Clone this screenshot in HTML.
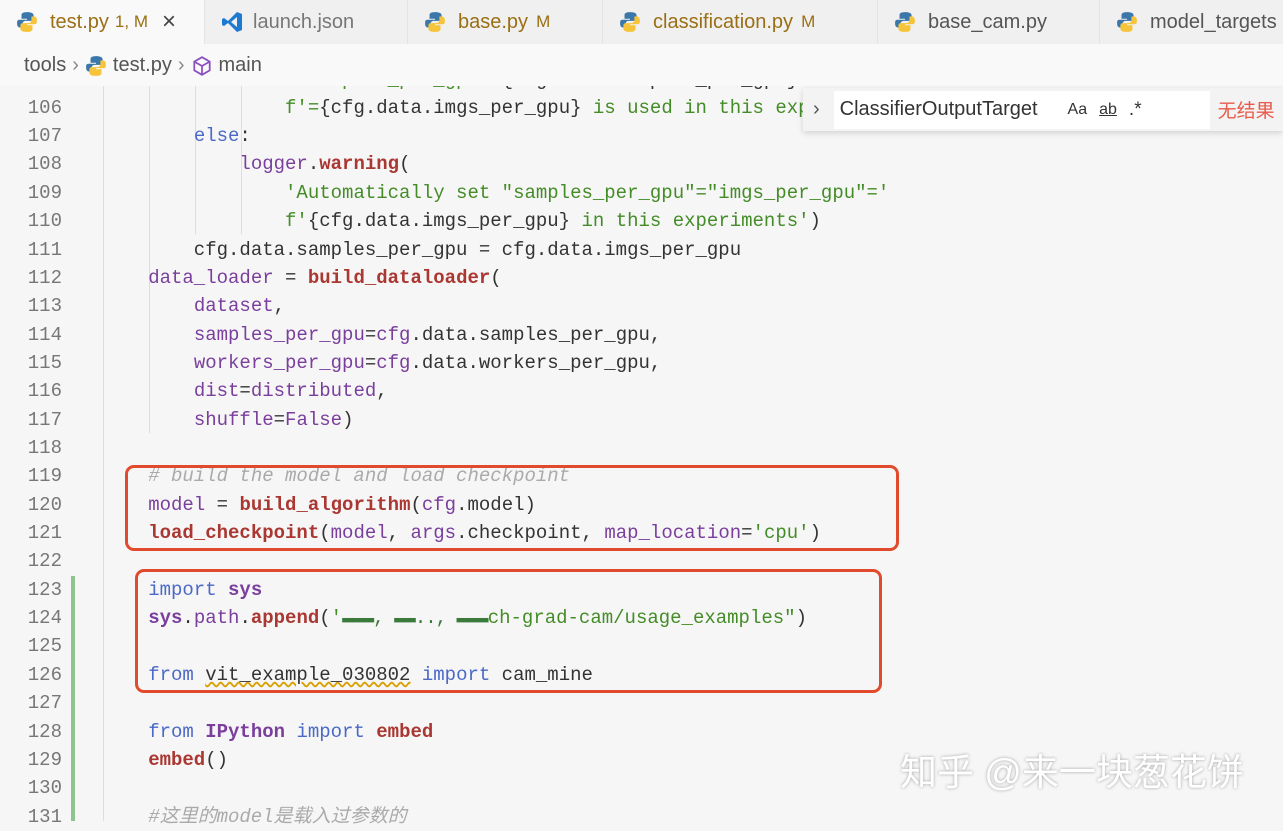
<!DOCTYPE html>
<html><head><meta charset="utf-8"><style>
*{margin:0;padding:0;box-sizing:border-box}
body{width:1283px;height:821px;overflow:hidden;background:#f6f6f6;font-family:"Liberation Sans","Noto Sans CJK SC",sans-serif;position:relative}
.tabs{position:absolute;left:0;top:0;width:1283px;height:44px;background:#ececec;z-index:3}
.tab{position:absolute;top:0;height:44px;display:flex;align-items:center;font-size:20px;color:#555;border-right:1px solid #e4e4e4;background:#f0f0f0}
.tab.act{background:#f9f9f9}
.mod{color:#9a6f14}
.py{width:22px;height:22px;margin:0 12px 0 16px;position:relative}
.crumbbg{position:absolute;top:44px;left:0;width:1283px;height:42px;background:#f9f9f9;z-index:2}
.crumb{position:absolute;top:54px;left:24px;font-size:20px;color:#555;display:flex;align-items:center;gap:6px;z-index:3}
.code{position:absolute;left:0;top:0;font-family:"Liberation Mono",monospace;font-size:19px}
.ln{position:absolute;width:62px;text-align:right;color:#777;height:28px;line-height:28px}
.l{position:absolute;left:102.6px;white-space:pre;height:28px;line-height:28px;color:#333}
.k{color:#4b69c6}.f{color:#aa3731;font-weight:bold}.v{color:#7a3e9d}.vb{color:#7a3e9d;font-weight:bold}.s{color:#448c27}.c{color:#aaa;font-style:italic}
.g{position:absolute;width:1px;background:#ddd}
.box{position:absolute;border:3px solid #e24a2e;border-radius:9px}
</style></head><body>
<div class="tabs">
<div class="tab act" style="left:0;width:205px"><svg class="py" viewBox="0 0 20 20"><path d="M10 1C5 1 5 3 5 4v3h5v1H3C1 8 1 10 1 11c0 3 1 4 3 4h2v-3c0-2 1-3 3-3h5c1 0 2-1 2-2V4c0-2-2-3-6-3z" fill="#3b77a8"/><path d="M10 19c5 0 5-2 5-3v-3h-5v-1h7c2 0 2-2 2-3 0-3-1-4-3-4h-2v3c0 2-1 3-3 3H6c-1 0-2 1-2 2v3c0 2 2 3 6 3z" fill="#f5c43a"/></svg><span class="mod">test.py</span><span class="mod" style="font-size:17px;margin-left:6px">1, M</span><span style="margin-left:14px;font-size:24px;color:#444">×</span></div>
<div class="tab" style="left:205px;width:203px"><svg style="margin:0 10px 0 16px" width="22" height="22" viewBox="0 0 22 22"><path d="M16 1L7 10 3 7 1 8v6l2 1 4-3 9 9 5-2V3z M16 6v10l-6-5z" fill="#1e7ad0" fill-rule="evenodd"/></svg><span style="color:#777">launch.json</span></div>
<div class="tab" style="left:408px;width:195px"><svg class="py" viewBox="0 0 20 20"><path d="M10 1C5 1 5 3 5 4v3h5v1H3C1 8 1 10 1 11c0 3 1 4 3 4h2v-3c0-2 1-3 3-3h5c1 0 2-1 2-2V4c0-2-2-3-6-3z" fill="#3b77a8"/><path d="M10 19c5 0 5-2 5-3v-3h-5v-1h7c2 0 2-2 2-3 0-3-1-4-3-4h-2v3c0 2-1 3-3 3H6c-1 0-2 1-2 2v3c0 2 2 3 6 3z" fill="#f5c43a"/></svg><span class="mod">base.py</span><span class="mod" style="font-size:17px;margin-left:8px">M</span></div>
<div class="tab" style="left:603px;width:275px"><svg class="py" viewBox="0 0 20 20"><path d="M10 1C5 1 5 3 5 4v3h5v1H3C1 8 1 10 1 11c0 3 1 4 3 4h2v-3c0-2 1-3 3-3h5c1 0 2-1 2-2V4c0-2-2-3-6-3z" fill="#3b77a8"/><path d="M10 19c5 0 5-2 5-3v-3h-5v-1h7c2 0 2-2 2-3 0-3-1-4-3-4h-2v3c0 2-1 3-3 3H6c-1 0-2 1-2 2v3c0 2 2 3 6 3z" fill="#f5c43a"/></svg><span class="mod">classification.py</span><span class="mod" style="font-size:17px;margin-left:8px">M</span></div>
<div class="tab" style="left:878px;width:222px"><svg class="py" viewBox="0 0 20 20"><path d="M10 1C5 1 5 3 5 4v3h5v1H3C1 8 1 10 1 11c0 3 1 4 3 4h2v-3c0-2 1-3 3-3h5c1 0 2-1 2-2V4c0-2-2-3-6-3z" fill="#3b77a8"/><path d="M10 19c5 0 5-2 5-3v-3h-5v-1h7c2 0 2-2 2-3 0-3-1-4-3-4h-2v3c0 2-1 3-3 3H6c-1 0-2 1-2 2v3c0 2 2 3 6 3z" fill="#f5c43a"/></svg><span>base_cam.py</span></div>
<div class="tab" style="left:1100px;width:200px"><svg class="py" viewBox="0 0 20 20"><path d="M10 1C5 1 5 3 5 4v3h5v1H3C1 8 1 10 1 11c0 3 1 4 3 4h2v-3c0-2 1-3 3-3h5c1 0 2-1 2-2V4c0-2-2-3-6-3z" fill="#3b77a8"/><path d="M10 19c5 0 5-2 5-3v-3h-5v-1h7c2 0 2-2 2-3 0-3-1-4-3-4h-2v3c0 2-1 3-3 3H6c-1 0-2 1-2 2v3c0 2 2 3 6 3z" fill="#f5c43a"/></svg><span>model_targets</span></div>
</div>
<div class="crumbbg"></div>
<div class="crumb"><span>tools</span><span style="color:#888">›</span><svg width="22" height="22" viewBox="0 0 20 20"><path d="M10 1C5 1 5 3 5 4v3h5v1H3C1 8 1 10 1 11c0 3 1 4 3 4h2v-3c0-2 1-3 3-3h5c1 0 2-1 2-2V4c0-2-2-3-6-3z" fill="#3b77a8"/><path d="M10 19c5 0 5-2 5-3v-3h-5v-1h7c2 0 2-2 2-3 0-3-1-4-3-4h-2v3c0 2-1 3-3 3H6c-1 0-2 1-2 2v3c0 2 2 3 6 3z" fill="#f5c43a"/></svg><span>test.py</span><span style="color:#888">›</span><svg width="22" height="22" viewBox="0 0 20 20"><path d="M10 2l7 4v8l-7 4-7-4V6zM3 6l7 4 7-4M10 10v8" fill="none" stroke="#8a4fc1" stroke-width="1.6"/></svg><span>main</span></div>

<div class="code">
<div class="g" style="left:103px;top:84px;height:737px"></div>
<div class="g" style="left:149px;top:84px;height:349px"></div>
<div class="g" style="left:195px;top:84px;height:150px"></div>
<div class="g" style="left:241px;top:84px;height:150px"></div>
<div style="position:absolute;left:71px;top:576px;width:4px;height:245px;background:#8fc48f"></div>

<div class="ln" style="top:66px">105</div><div class="l" style="top:66px">                <span class="s">f"samples_per_gpu"=</span>{cfg.data.samples_per_gpu}</div>
<div class="ln" style="top:94px">106</div><div class="l" style="top:94px">                <span class="s">f'=</span>{cfg.data.imgs_per_gpu}<span class="s"> is used in this exp</span></div>
<div class="ln" style="top:122px">107</div><div class="l" style="top:122px">        <span class="k">else</span>:</div>
<div class="ln" style="top:150px">108</div><div class="l" style="top:150px">            <span class="v">logger</span>.<span class="f">warning</span>(</div>
<div class="ln" style="top:179px">109</div><div class="l" style="top:179px">                <span class="s">'Automatically set "samples_per_gpu"="imgs_per_gpu"='</span></div>
<div class="ln" style="top:207px">110</div><div class="l" style="top:207px">                <span class="s">f'</span>{cfg.data.imgs_per_gpu}<span class="s"> in this experiments'</span>)</div>
<div class="ln" style="top:236px">111</div><div class="l" style="top:236px">        cfg.data.samples_per_gpu = cfg.data.imgs_per_gpu</div>
<div class="ln" style="top:264px">112</div><div class="l" style="top:264px">    <span class="v">data_loader</span> = <span class="f">build_dataloader</span>(</div>
<div class="ln" style="top:292px">113</div><div class="l" style="top:292px">        <span class="v">dataset</span>,</div>
<div class="ln" style="top:321px">114</div><div class="l" style="top:321px">        <span class="v">samples_per_gpu</span>=<span class="v">cfg</span>.data.samples_per_gpu,</div>
<div class="ln" style="top:349px">115</div><div class="l" style="top:349px">        <span class="v">workers_per_gpu</span>=<span class="v">cfg</span>.data.workers_per_gpu,</div>
<div class="ln" style="top:377px">116</div><div class="l" style="top:377px">        <span class="v">dist</span>=<span class="v">distributed</span>,</div>
<div class="ln" style="top:406px">117</div><div class="l" style="top:406px">        <span class="v">shuffle</span>=<span class="v">False</span>)</div>
<div class="ln" style="top:434px">118</div>
<div class="ln" style="top:462px">119</div><div class="l" style="top:462px">    <span class="c"># build the model and load checkpoint</span></div>
<div class="ln" style="top:491px">120</div><div class="l" style="top:491px">    <span class="v">model</span> = <span class="f">build_algorithm</span>(<span class="v">cfg</span>.model)</div>
<div class="ln" style="top:519px">121</div><div class="l" style="top:519px">    <span class="f">load_checkpoint</span>(<span class="v">model</span>, <span class="v">args</span>.checkpoint, <span class="v">map_location</span>=<span class="s">'cpu'</span>)</div>
<div class="ln" style="top:547px">122</div>
<div class="ln" style="top:576px">123</div><div class="l" style="top:576px">    <span class="k">import</span> <span class="vb">sys</span></div>
<div class="ln" style="top:604px">124</div><div class="l" style="top:604px">    <span class="vb">sys</span>.<span class="v">path</span>.<span class="f">append</span>(<span class="s">'<span style="color:#3a7a3a;letter-spacing:-1px">▬▬▬, ▬▬.., ▬▬▬</span>ch-grad-cam/usage_examples"</span>)</div>
<div class="ln" style="top:632px">125</div>
<div class="ln" style="top:661px">126</div><div class="l" style="top:661px">    <span class="k">from</span> <span style="text-decoration:underline wavy #d9a000">vit_example_030802</span> <span class="k">import</span> cam_mine</div>
<div class="ln" style="top:689px">127</div>
<div class="ln" style="top:718px">128</div><div class="l" style="top:718px">    <span class="k">from</span> <span class="vb">IPython</span> <span class="k">import</span> <span class="f">embed</span></div>
<div class="ln" style="top:746px">129</div><div class="l" style="top:746px">    <span class="f">embed</span>()</div>
<div class="ln" style="top:774px">130</div>
<div class="ln" style="top:803px">131</div><div class="l" style="top:803px">    <span class="c" style="font-family:'Liberation Mono','Noto Sans CJK SC',monospace">#这里的model是载入过参数的</span></div>
</div>

<div class="box" style="left:125px;top:465px;width:774px;height:86px"></div>
<div class="box" style="left:135px;top:569px;width:747px;height:124px"></div>

<div style="position:absolute;left:803px;top:88px;width:480px;height:43px;background:#f3f3f3;box-shadow:0 2px 6px rgba(0,0,0,.15);display:flex;align-items:center;z-index:4">
<span style="color:#555;font-size:20px;margin-left:10px">›</span>
<div style="background:#fff;height:38px;width:376px;margin-left:14px;display:flex;align-items:center;font-size:20px;color:#333;padding-left:6px">ClassifierOutputTarget<span style="font-size:16px;margin-left:30px">Aa</span><span style="font-size:16px;margin-left:12px;text-decoration:underline">ab</span><span style="font-size:19px;margin-left:12px">.*</span></div>
<span style="color:#e85b4b;font-size:19px;margin-left:8px">无结果</span>
</div>

<div style="position:absolute;left:900px;top:742px;font-size:37px;color:#fff;text-shadow:0 0 3px rgba(0,0,0,.35);white-space:nowrap">知乎 @来一块葱花饼</div>
</body></html>
